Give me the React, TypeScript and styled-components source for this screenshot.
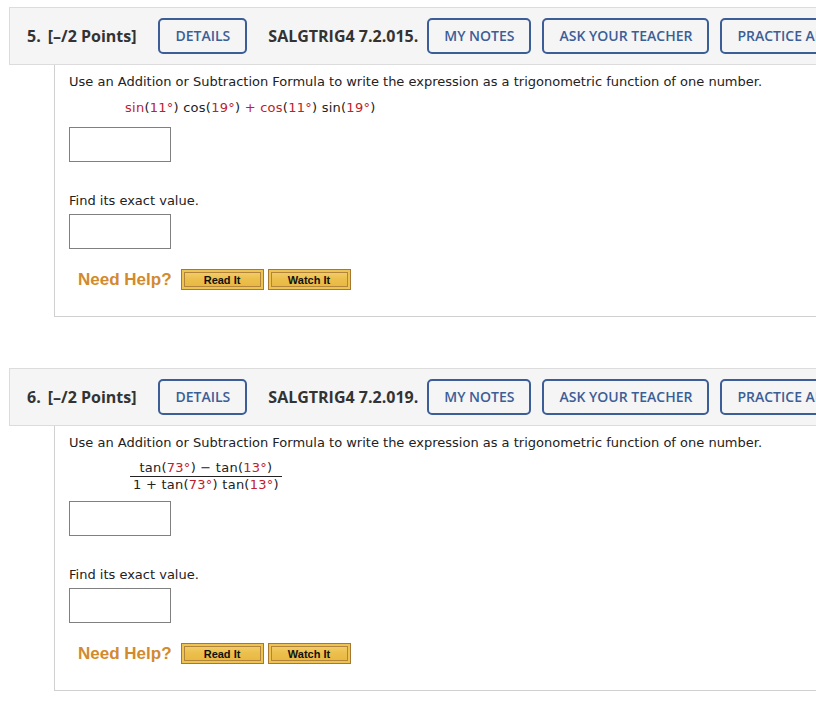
import React from "react";
import styled, { createGlobalStyle } from "styled-components";

const Global = createGlobalStyle`
  html, body { margin: 0; padding: 0; background: #fff; overflow: hidden; }
  body { width: 816px; }
`;

const Page = styled.div`
  padding: 7px 0 0 9px;
  width: 1000px;
  display: flex;
  flex-direction: column;
  gap: 51px;
`;

const Question = styled.section`
  display: flex;
  flex-direction: column;
`;

const Header = styled.div`
  display: flex;
  align-items: center;
  height: 56px;
  background: #f5f5f5;
  border: 1px solid #dcdcdc;
  border-right: none;
  padding-left: 17px;
  font-family: "Open Sans", "Liberation Sans", sans-serif;
  color: #333;
  white-space: nowrap;
`;

const Num = styled.span`
  font-weight: 700;
  font-size: 16px;
  margin-right: 7px;
`;

const Points = styled.span`
  font-weight: 700;
  font-size: 16px;
  margin-right: 22px;
`;

const Code = styled.span`
  font-weight: 700;
  font-size: 16px;
  margin: 0 9px 0 21px;
`;

const HeadButton = styled.button<{ $gap?: number }>`
  height: 36px;
  box-sizing: border-box;
  border: 2px solid #3c5e97;
  border-radius: 5px;
  background: #f5f5f5;
  color: #3c5e97;
  font-family: "Open Sans", "Liberation Sans", sans-serif;
  font-weight: 600;
  font-size: 14px;
  padding: 0 15px 1px;
  margin-right: ${(p) => p.$gap ?? 0}px;
  white-space: nowrap;
  cursor: pointer;
`;

const Body = styled.div`
  margin-left: 45px;
  border-left: 1px solid #d0d0d0;
  border-bottom: 1px solid #d0d0d0;
  padding: 8px 0 0 14px;
  font-family: "DejaVu Sans", Verdana, sans-serif;
  font-size: 13px;
  color: #222;
`;

const Para = styled.div<{ $top?: number }>`
  line-height: 18px;
  margin-top: ${(p) => p.$top ?? 0}px;
`;

const MathLine = styled.div`
  margin: 8px 0 0 56px;
  line-height: 18px;
  letter-spacing: 0.25px;
`;

const Red = styled.span`
  color: #c0202a;
`;

const Frac = styled.div`
  display: inline-flex;
  flex-direction: column;
  align-items: center;
  margin: 8px 0 0 61px;
  line-height: 15px;
  letter-spacing: 0.25px;
`;

const Numer = styled.span`
  align-self: stretch;
  text-align: center;
  padding: 0 0 1px 0;
  border-bottom: 1px solid #222;
`;

const Denom = styled.span`
  padding: 0 3px;
`;

const Answer = styled.div<{ $top: number }>`
  width: 102px;
  height: 35px;
  box-sizing: border-box;
  border: 1px solid #808080;
  background: #fff;
  margin-top: ${(p) => p.$top}px;
`;

const Help = styled.div`
  display: flex;
  align-items: center;
  margin: 20px 0 26px 9px;
`;

const HelpLabel = styled.span`
  font-family: "Liberation Sans", Arial, sans-serif;
  font-weight: 700;
  font-size: 17px;
  color: #d38a2c;
  margin-right: 9px;
`;

const HelpButton = styled.button`
  width: 83px;
  height: 21px;
  box-sizing: border-box;
  border: 1px solid #a67833;
  background: linear-gradient(#f4d272, #ecc04e 45%, #e7b53e);
  box-shadow: inset 0 0 0 2px #edc352, inset 0 0 0 3px #b3853a;
  font-family: "Liberation Sans", Arial, sans-serif;
  font-weight: 700;
  font-size: 11px;
  color: #111;
  padding: 0;
  margin-right: 4px;
  cursor: pointer;
`;

type QProps = {
  num: string;
  code: string;
  expr: React.ReactNode;
  firstTop: number;
};

function QuestionBlock({ num, code, expr, firstTop }: QProps) {
  return (
    <Question>
      <Header>
        <Num>{num}</Num>
        <Points>[–/2 Points]</Points>
        <HeadButton>DETAILS</HeadButton>
        <Code>{code}</Code>
        <HeadButton $gap={11}>MY NOTES</HeadButton>
        <HeadButton $gap={11}>ASK YOUR TEACHER</HeadButton>
        <HeadButton>PRACTICE ANOTHER</HeadButton>
      </Header>
      <Body>
        <Para>
          Use an Addition or Subtraction Formula to write the expression as a trigonometric function of one number.
        </Para>
        {expr}
        <Answer $top={firstTop} />
        <Para $top={30}>Find its exact value.</Para>
        <Answer $top={4} />
        <Help>
          <HelpLabel>Need Help?</HelpLabel>
          <HelpButton>Read It</HelpButton>
          <HelpButton>Watch It</HelpButton>
        </Help>
      </Body>
    </Question>
  );
}

export default function App() {
  return (
    <>
      <Global />
      <Page>
        <QuestionBlock
          num="5."
          code="SALGTRIG4 7.2.015."
          firstTop={10}
          expr={
            <MathLine>
              <Red>sin</Red>(<Red>11°</Red>) cos(<Red>19°</Red>) <Red>+ cos</Red>(<Red>11°</Red>) sin(<Red>19°</Red>)
            </MathLine>
          }
        />
        <QuestionBlock
          num="6."
          code="SALGTRIG4 7.2.019."
          firstTop={9}
          expr={
            <div>
              <Frac>
                <Numer>
                  tan(<Red>73°</Red>) − tan(<Red>13°</Red>)
                </Numer>
                <Denom>
                  1 + tan(<Red>73°</Red>) tan(<Red>13°</Red>)
                </Denom>
              </Frac>
            </div>
          }
        />
      </Page>
    </>
  );
}
